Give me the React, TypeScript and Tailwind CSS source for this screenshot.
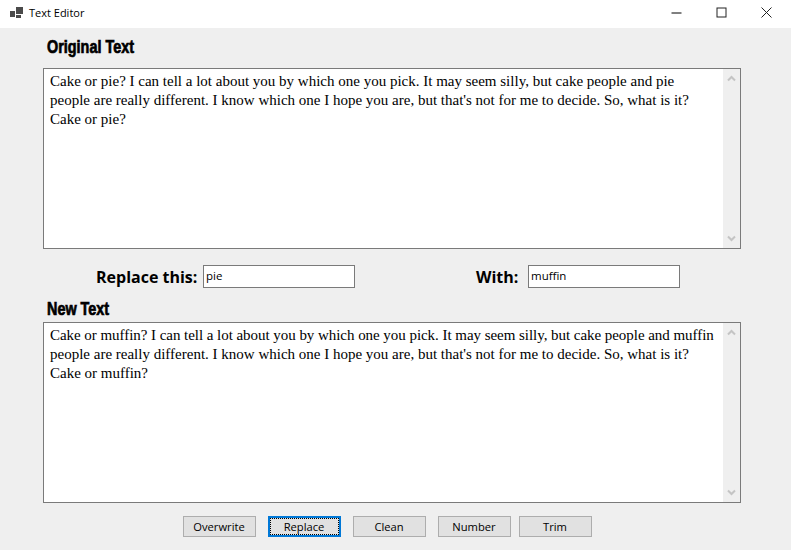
const T1 = [
  "Cake or pie? I can tell a lot about you by which one you pick. It may seem silly, but cake people and pie",
  "people are really different. I know which one I hope you are, but that's not for me to decide. So, what is it?",
  "Cake or pie?",
];
const T2 = [
  "Cake or muffin? I can tell a lot about you by which one you pick. It may seem silly, but cake people and muffin",
  "people are really different. I know which one I hope you are, but that's not for me to decide. So, what is it?",
  "Cake or muffin?",
];

function Chevron({ up }: { up?: boolean }) {
  return (
    <svg width="9" height="7" viewBox="0 0 9 7" className="block">
      <path d={up ? "M1 5.5 L4.5 2 L8 5.5" : "M1 1.5 L4.5 5 L8 1.5"} fill="none" stroke="#c4c4c4" strokeWidth="2" />
    </svg>
  );
}

function Box({ lines, firstClass }: { lines: string[]; firstClass?: string }) {
  return (
    <div className="flex h-[181px] w-[698px] border border-[#7a7a7a] bg-white">
      <div className="w-[676px] whitespace-nowrap pl-[6px] pt-[3px] font-['Liberation_Serif',serif] text-[15px] leading-[19px] text-black">
        {lines.map((l, i) => (
          <div key={i} className={i === 0 ? firstClass : ""}>{l}</div>
        ))}
      </div>
      <div className="ml-auto flex w-[17px] flex-col items-center justify-between bg-[#efefef] py-[6px]">
        <Chevron up />
        <Chevron />
      </div>
    </div>
  );
}

function Heading({ children }: { children: string }) {
  return (
    <div className="ml-[4px] origin-left scale-x-[0.8] whitespace-nowrap font-['Liberation_Sans',sans-serif] text-[18px] font-bold leading-[20px] text-black [-webkit-text-stroke:0.7px_black]">
      {children}
    </div>
  );
}

function Field({ value }: { value: string }) {
  return (
    <div className="flex h-[23px] w-[152px] items-center border border-[#7a7a7a] bg-white pb-[1px] pl-[2px] font-['Open_Sans',sans-serif] text-[11.5px] text-black">
      {value}
    </div>
  );
}

function Btn({ label, focus, className }: { label: string; focus?: boolean; className: string }) {
  return (
    <div
      className={
        "flex h-[21px] w-[73px] items-center justify-center pt-[1px] pr-[1px] font-['Open_Sans',sans-serif] text-[11.2px] text-black " +
        (focus ? "border-2 border-[#0078d7] bg-[#e1e1e1] outline-1 -outline-offset-3 outline-dotted outline-black " : "border border-[#adadad] bg-[#e1e1e1] ") +
        className
      }
    >
      {label}
    </div>
  );
}

export default function App() {
  return (
    <div className="flex h-[550px] w-[791px] flex-col overflow-hidden bg-[#efefef]">
      <div className="flex h-[28px] items-center bg-white pb-[3px]">
        <svg width="14" height="12" viewBox="0 0 14 12" className="ml-[10px]">
          <rect x="0" y="4" width="5" height="6" fill="#4a4a4a" />
          <rect x="6" y="0" width="7" height="7" fill="#4a4a4a" />
          <rect x="6" y="8" width="5" height="3" fill="#4a4a4a" />
        </svg>
        <span className="ml-[5px] mt-[2px] font-['Open_Sans',sans-serif] text-[11px] text-black">Text Editor</span>
        <div className="ml-auto flex items-center">
          <svg width="11" height="11" viewBox="0 0 11 11" className="mr-[34px]"><path d="M0.5 6H10.5" stroke="#000" /></svg>
          <svg width="11" height="11" viewBox="0 0 11 11" className="mr-[34px]"><rect x="1" y="1" width="9" height="9" fill="none" stroke="#222" /></svg>
          <svg width="11" height="11" viewBox="0 0 11 11" className="mr-[19px]"><path d="M0.5 0.5L10.5 10.5M10.5 0.5L0.5 10.5" stroke="#222" /></svg>
        </div>
      </div>
      <div className="flex flex-col pl-[43px]">
        <div className="mt-[9px]"><Heading>Original Text</Heading></div>
        <div className="mt-[11px]"><Box lines={T1} /></div>
        <div className="mt-[16px] flex h-[23px] items-center">
          <span className="ml-[53px] w-[107px] whitespace-nowrap font-['Open_Sans',sans-serif] text-[16px] font-bold leading-none text-black">Replace this:</span>
          <Field value="pie" />
          <span className="ml-[121px] w-[52px] whitespace-nowrap font-['Open_Sans',sans-serif] text-[16px] font-bold leading-none text-black">With:</span>
          <Field value="muffin" />
        </div>
        <div className="mt-[11px]"><Heading>New Text</Heading></div>
        <div className="mt-[3px]"><Box lines={T2} firstClass="tracking-[-0.045px]" /></div>
        <div className="mt-[13px] flex pl-[140px]">
          <Btn label="Overwrite" className="" />
          <Btn label="Replace" focus className="ml-[12px]" />
          <Btn label="Clean" className="ml-[12px]" />
          <Btn label="Number" className="ml-[12px]" />
          <Btn label="Trim" className="ml-[8px]" />
        </div>
      </div>
    </div>
  );
}
